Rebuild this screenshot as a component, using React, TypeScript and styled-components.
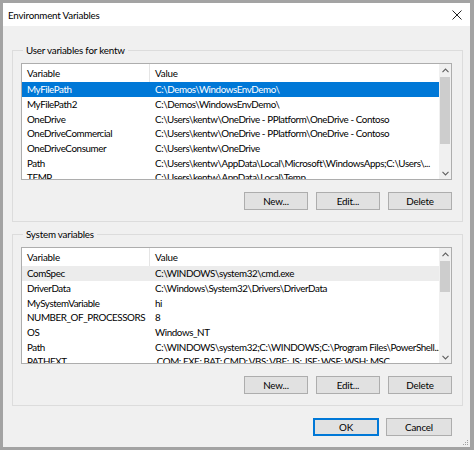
import React from "react";
import styled, { createGlobalStyle } from "styled-components";

const Global = createGlobalStyle`
  html, body { margin: 0; padding: 0; background: #fff; }
  * { box-sizing: border-box; }
`;

const font = `Lato, "Noto Sans", sans-serif`;

type Row = [string, string];

const userRows: Row[] = [
  ["MyFilePath", "C:\\Demos\\WindowsEnvDemo\\"],
  ["MyFilePath2", "C:\\Demos\\WindowsEnvDemo\\"],
  ["OneDrive", "C:\\Users\\kentw\\OneDrive - PPlatform\\OneDrive - Contoso"],
  ["OneDriveCommercial", "C:\\Users\\kentw\\OneDrive - PPlatform\\OneDrive - Contoso"],
  ["OneDriveConsumer", "C:\\Users\\kentw\\OneDrive"],
  ["Path", "C:\\Users\\kentw\\AppData\\Local\\Microsoft\\WindowsApps;C:\\Users\\..."],
  ["TEMP", "C:\\Users\\kentw\\AppData\\Local\\Temp"],
];

const systemRows: Row[] = [
  ["ComSpec", "C:\\WINDOWS\\system32\\cmd.exe"],
  ["DriverData", "C:\\Windows\\System32\\Drivers\\DriverData"],
  ["MySystemVariable", "hi"],
  ["NUMBER_OF_PROCESSORS", "8"],
  ["OS", "Windows_NT"],
  ["Path", "C:\\WINDOWS\\system32;C:\\WINDOWS;C:\\Program Files\\PowerShell..."],
  ["PATHEXT", ".COM;.EXE;.BAT;.CMD;.VBS;.VBE;.JS;.JSE;.WSF;.WSH;.MSC"],
];

const Window = styled.div`
  width: 474px;
  height: 450px;
  border-style: solid;
  border-color: #a3a3a3;
  border-width: 3px 4px 3px 3px;
  background: #f0f0f0;
  display: flex;
  flex-direction: column;
  font-family: ${font};
  font-size: 9.8px;
  letter-spacing: -0.2px;
  color: #000;
  position: relative;
`;

const TitleBar = styled.div`
  height: 23px;
  background: #fff;
  display: flex;
  align-items: center;
  justify-content: space-between;
  padding: 0 6px 0 5px;
  font-size: 9.8px;
`;

const Close = styled.div`
  width: 14px;
  height: 14px;
  display: flex;
  align-items: center;
  justify-content: center;
`;

const Body = styled.div`
  flex: 1;
  display: flex;
  flex-direction: column;
  padding: 17px 7px 0 9px;
`;

const Group = styled.fieldset<{ $top?: number }>`
  margin: ${(p) => p.$top ?? 0}px 0 0 0;
  border: 1px solid #dcdcdc;
  padding: 6px 10px 11px 8px;
  min-width: 0;
`;

const Legend = styled.legend`
  padding: 0 3px;
  margin-left: 2px;
  line-height: 14px;
`;

const ListBox = styled.div`
  height: 117px;
  border: 1px solid #adadad;
  background: #fff;
  display: flex;
  overflow: hidden;
`;

const Table = styled.div`
  flex: 1;
  min-width: 0;
  display: flex;
  flex-direction: column;
`;

const Header = styled.div`
  height: 18px;
  flex-shrink: 0;
  display: grid;
  grid-template-columns: 128px 1fr;
  align-items: center;
`;

const HeadCell = styled.div<{ $sep?: boolean }>`
  padding-left: 5px;
  height: 100%;
  display: flex;
  align-items: center;
  border-right: ${(p) => (p.$sep ? "1px solid #e5e5e5" : "none")};
`;

const RowLine = styled.div<{ $state?: "selected" | "hover" }>`
  height: 14.67px;
  flex-shrink: 0;
  display: grid;
  grid-template-columns: 128px 1fr;
  align-items: center;
  white-space: nowrap;
  letter-spacing: -0.4px;
  background: ${(p) =>
    p.$state === "selected" ? "#0078d7" : p.$state === "hover" ? "#ececec" : "transparent"};
  color: ${(p) => (p.$state === "selected" ? "#fff" : "#000")};
`;

const Cell = styled.div`
  padding-left: 5px;
  overflow: hidden;
`;

const ScrollBar = styled.div`
  width: 12px;
  flex-shrink: 0;
  background: #f0f0f0;
  display: flex;
  flex-direction: column;
`;

const Arrow = styled.div`
  height: 12px;
  display: flex;
  align-items: center;
  justify-content: center;
  flex-shrink: 0;
`;

const Track = styled.div`
  flex: 1;
  padding: 1px 1px;
  display: flex;
  flex-direction: column;
`;

const Thumb = styled.div<{ $h: number }>`
  height: ${(p) => p.$h}px;
  background: #cdcdcd;
`;

const Buttons = styled.div<{ $top: number }>`
  display: flex;
  justify-content: flex-end;
  gap: 8px;
  margin-top: ${(p) => p.$top}px;
`;

const Button = styled.button<{ $w?: number; $default?: boolean }>`
  width: ${(p) => p.$w ?? 64}px;
  height: 18px;
  background: #e1e1e1;
  border: 1px solid ${(p) => (p.$default ? "#0078d7" : "#adadad")};
  box-shadow: ${(p) => (p.$default ? "inset 0 0 0 1px #0078d7" : "none")};
  font-family: ${font};
  font-size: 9.8px;
  letter-spacing: -0.2px;
  color: #000;
  padding: 0;
  border-radius: 0;
`;

const Footer = styled.div`
  display: flex;
  justify-content: flex-end;
  gap: 7px;
  padding: 12px 11px 0 0;
`;

const Grip = styled.svg`
  position: absolute;
  right: 1px;
  bottom: 1px;
`;

const Chevron = ({ up }: { up?: boolean }) => (
  <svg width="7" height="5" viewBox="0 0 7 5">
    <path
      d={up ? "M0.5 4.2 L3.5 1 L6.5 4.2" : "M0.5 0.8 L3.5 4 L6.5 0.8"}
      fill="none"
      stroke="#606060"
      strokeWidth="1.1"
    />
  </svg>
);

const VarList = ({
  rows,
  selected,
  hover,
  thumbTop,
  thumbH,
}: {
  rows: Row[];
  selected?: number;
  hover?: number;
  thumbTop: number;
  thumbH: number;
}) => (
  <ListBox>
    <Table>
      <Header>
        <HeadCell $sep>Variable</HeadCell>
        <HeadCell>Value</HeadCell>
      </Header>
      {rows.map(([k, v], i) => (
        <RowLine key={k + i} $state={i === selected ? "selected" : i === hover ? "hover" : undefined}>
          <Cell>{k}</Cell>
          <Cell>{v}</Cell>
        </RowLine>
      ))}
    </Table>
    <ScrollBar>
      <Arrow>
        <Chevron up />
      </Arrow>
      <Track style={{ paddingTop: thumbTop }}>
        <Thumb $h={thumbH} />
      </Track>
      <Arrow>
        <Chevron />
      </Arrow>
    </ScrollBar>
  </ListBox>
);

export default function App() {
  return (
    <>
      <Global />
      <Window>
        <TitleBar>
          <span>Environment Variables</span>
          <Close>
            <svg width="10" height="10" viewBox="0 0 10 10">
              <path d="M0.5 0.5 L9.5 9.5 M9.5 0.5 L0.5 9.5" stroke="#222" strokeWidth="1" />
            </svg>
          </Close>
        </TitleBar>
        <Body>
          <Group>
            <Legend>User variables for kentw</Legend>
            <VarList rows={userRows} selected={0} thumbTop={1} thumbH={67} />
            <Buttons $top={12}>
              <Button>New...</Button>
              <Button>Edit...</Button>
              <Button>Delete</Button>
            </Buttons>
          </Group>
          <Group $top={5}>
            <Legend>System variables</Legend>
            <VarList rows={systemRows} hover={0} thumbTop={1} thumbH={31} />
            <Buttons $top={12}>
              <Button>New...</Button>
              <Button>Edit...</Button>
              <Button>Delete</Button>
            </Buttons>
          </Group>
          <Footer>
            <Button $w={66} $default>
              OK
            </Button>
            <Button $w={66}>Cancel</Button>
          </Footer>
        </Body>
        <Grip width="8" height="8" viewBox="0 0 8 8">
          {[
            [6, 2],
            [6, 4],
            [4, 4],
            [6, 6],
            [4, 6],
            [2, 6],
          ].map(([x, y]) => (
            <rect key={`${x}-${y}`} x={x} y={y} width="1" height="1" fill="#a0a0a0" />
          ))}
        </Grip>
      </Window>
    </>
  );
}
